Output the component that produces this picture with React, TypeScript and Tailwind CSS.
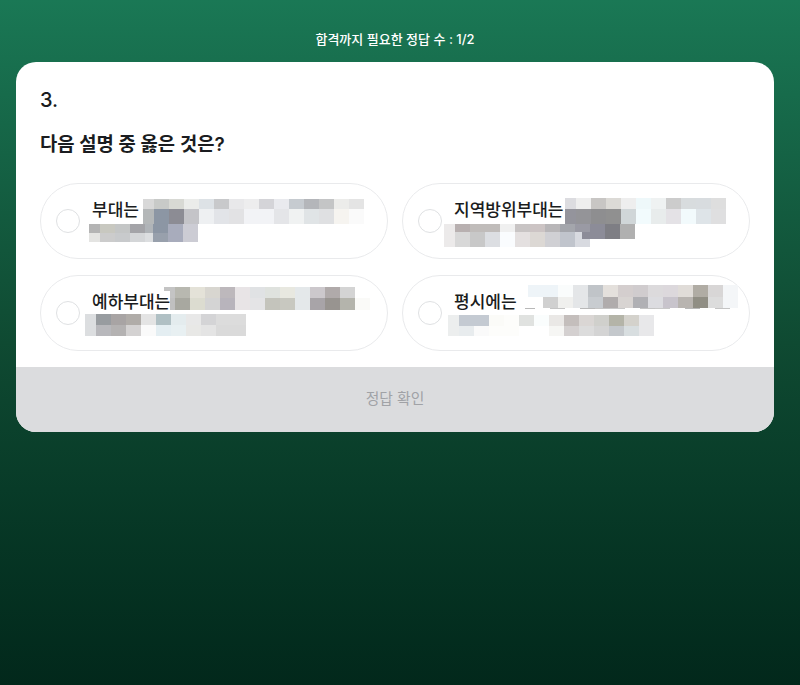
type MosaicRow = { y: number; h: number; x: number; first: number; colors: string[] }

const font = { fontFamily: '"Inter", "Noto Sans CJK KR", sans-serif' }

const options: { label: string; left: number; top: number; rows: MosaicRow[] }[] = [
  {
    label: '부대는',
    left: 40,
    top: 183,
    rows: [
      { y: 199, h: 10, x: 143, first: 11, colors: ['#d8d8d8', '#c8cac8', '#d8d9d4', '#ebecea', '#dde2e6', '#c8c9cb', '#e8e8ea', '#ededee', '#d4d4d8', '#e9eaee', '#c6cbd0', '#b4b6ba', '#c4c5c6', '#ececea', '#e4e4e4'] },
      { y: 209, h: 15, x: 143, first: 11, colors: ['#b4b7b8', '#8c96a4', '#8c8c94', '#c4c4c8', '#eef0f2', '#e2e4e8', '#e2e2e4', '#f2f3f6', '#f2f3f6', '#e4e5e8', '#f0f2f2', '#e0e4e6', '#dfe0e2', '#f6f4f0', '#fafafa'] },
      { y: 224, h: 9, x: 89, first: 11, colors: ['#b4b4b4', '#c8c8c0', '#c4c6c6', '#a4a4a8'] },
      { y: 224, h: 9, x: 145, first: 8, colors: ['#b0b4b8', '#8c96a4', '#a8acbc', '#ccccd4'] },
      { y: 233, h: 9, x: 89, first: 11, colors: ['#e4e4e2', '#cccccc', '#c8cacc', '#d4d6d8'] },
      { y: 233, h: 9, x: 145, first: 8, colors: ['#dcdee0', '#98a0ac', '#a8acbc', '#ccccd4'] },
    ],
  },
  {
    label: '지역방위부대는',
    left: 402,
    top: 183,
    rows: [
      { y: 198, h: 11, x: 565, first: 11, colors: ['#dcdce0', '#eeeeee', '#c8c6c4', '#dcdad6', '#eeeeee', '#eef8fa', '#eff2f2', '#cccccc', '#d8dcde', '#d8dcdf', '#dedede'] },
      { y: 209, h: 15, x: 565, first: 11, colors: ['#94949c', '#949498', '#8e8e90', '#909090', '#d0d6d8', '#f2fbfd', '#e8ecec', '#e4e2e6', '#f2fafc', '#dee4e8', '#dfdfe0'] },
      { y: 224, h: 8, x: 444, first: 11, colors: ['#eceaea', '#b8b0b0', '#c0bcba', '#c0bcba', '#f0f0f0', '#c8c4c4', '#ccc4c4', '#b8b6b8', '#a4a6ac', '#9a9aa4', '#8c8c98', '#7e7e84', '#b0b0b0'] },
      { y: 232, h: 15, x: 444, first: 11, colors: ['#eceaea', '#d8d8d8', '#c8c8c8', '#dcdee2', '#fafcfe', '#e4e0e0', '#dcd8d4', '#d0d0d4', '#c0c4cc', '#d8dae0'] },
      { y: 232, h: 7, x: 582, first: 23, colors: ['#8c8c98', '#7e7e84', '#b0b0b0'] },
    ],
  },
  {
    label: '예하부대는',
    left: 40,
    top: 275,
    rows: [
      { y: 287, h: 11, x: 164, first: 11, colors: ['#c4c4c4', '#b8b8b0', '#e4e2d8', '#d8d6d0', '#bdb8bc', '#e8e4e6', '#e0e2e4', '#dfe2de', '#e8e8e0', '#e4e8ea', '#ccc8cc', '#b0aaaa', '#d4d4d4'] },
      { y: 298, h: 12, x: 164, first: 11, colors: ['#c0c0c0', '#a8a8a0', '#dcdcd0', '#d4d4d4', '#b8b4bc', '#e8e4e6', '#e4e4e6', '#c4c4bc', '#c8c8c0', '#e4e8ea', '#a8a4a8', '#989490', '#b4b4ac', '#fafaf8'] },
      { y: 314, h: 11, x: 85, first: 11, colors: ['#dcdee0', '#989ca0', '#a8a4a4', '#b0aca8', '#e4e4e4', '#b0c0c4', '#e4ecee', '#e8e8e8', '#d4d4d6', '#dcdcdc', '#dcdcdc'] },
      { y: 325, h: 11, x: 85, first: 11, colors: ['#dcdee0', '#b8b8bc', '#b4b2b2', '#d4d2d2', '#fafafa', '#e4eef2', '#e8f0f2', '#e8e8e6', '#e4e4e4', '#dadada', '#dadada'] },
    ],
  },
  {
    label: '평시에는',
    left: 402,
    top: 275,
    rows: [
      { y: 285, h: 12, x: 528, first: 15, colors: ['#eef4f8', '#eef4f8', '#fafcfc', '#e4e6e8', '#c0c4c8', '#e4e0dc', '#d4cece', '#d0ccce', '#dcdadc', '#dcd8dc', '#e0dcd8', '#b0aca4', '#d8d6d6', '#f4f6f8'] },
      { y: 297, h: 11, x: 543, first: 15, colors: ['#d0d0d0', '#f0f0ee', '#e4e6e8', '#c8ccd0', '#b0acac', '#d8d4d2', '#b0b0b4', '#dcdce0', '#c8c4cc', '#b8b4b0', '#908e84', '#dcdcdc', '#f4f6f8'] },
      { y: 308, h: 1, x: 525, first: 10, colors: ['#b8b8b8', '#ffffff', '#c4c4c4', '#ffffff', '#b8b8b8', '#c4c4c4', '#c8c8c8', '#ffffff', '#c4c4c4', '#c8c8c8', '#ffffff', '#b8b8b8', '#ffffff', '#c4c4c4'] },
      { y: 315, h: 11, x: 448, first: 11, colors: ['#eceeee', '#c4cad2', '#c4cad2', '#fbfbf8', '#fdfdfb', '#e0e2e0', '#fafdfd', '#eae8e6', '#c4bebc', '#dad6d4', '#d0d0cc', '#b4b4a8', '#d4d2cc', '#e8e8ea'] },
      { y: 326, h: 10, x: 448, first: 11, colors: ['#eceeee', '#e8ecee', '#fafafa', '#fdfdfb', '#fdfdfb', '#ffffff', '#ffffff', '#f6f6f4', '#d4d0d0', '#dcdcdc', '#d4d4d4', '#c4c8cc', '#d8dee0', '#e8e8ea'] },
    ],
  },
]

// censored part of the answer text, coordinates are page pixels
function Mosaic({ left, top, rows }: { left: number; top: number; rows: MosaicRow[] }) {
  return (
    <svg className="absolute -inset-px pointer-events-none" width={348} height={76} viewBox={`${left} ${top} 348 76`} shapeRendering="crispEdges">
      {rows.map(row =>
        row.colors.map((color, i) => (
          <rect
            key={`${row.y}-${row.x}-${i}`}
            x={i === 0 ? row.x : row.x + row.first + (i - 1) * 15}
            y={row.y}
            width={i === 0 ? row.first : 15}
            height={row.h}
            fill={color}
          />
        ))
      )}
    </svg>
  )
}

export default function App() {
  return (
    <div className="min-h-[685px] pl-4 pr-[26px] bg-gradient-to-b from-[#1a7855] via-[#0f4a32] to-[#02281b]" style={font}>
      <div className="h-[62px] pt-[17px] flex items-center justify-center text-[13px] font-medium text-white">
        합격까지 필요한 정답 수 : 1/2
      </div>

      <div className="rounded-[20px] overflow-hidden bg-white">
        <div className="px-6 pt-6 pb-4">
          <div className="h-7 leading-7 text-[20px] font-medium text-[#1a1c20]">3.</div>
          <h2 className="mt-4 h-[30px] leading-[30px] text-[18.8px] font-semibold text-[#1a1c20]">다음 설명 중 옳은 것은?</h2>
          <div className="mt-[23px] grid grid-cols-2 gap-x-[14px] gap-y-4">
            {options.map(opt => (
              <div key={opt.label} className="relative h-[76px] flex items-center gap-3 pl-[15px] rounded-full border border-[#e9eaec] bg-white">
                <Mosaic left={opt.left} top={opt.top} rows={opt.rows} />
                <span className="relative w-6 h-6 rounded-full border border-[#dfe1e3] bg-white flex-shrink-0" />
                <div className="relative h-[46px] pt-px">
                  <span className="block w-fit leading-[23px] text-[17px] font-medium text-[#1a1c20] bg-white">{opt.label}</span>
                </div>
              </div>
            ))}
          </div>
        </div>
        <div className="h-[65px] flex items-center justify-center bg-[#dbdcde] text-[14.8px] text-[#a0a2a6]">정답 확인</div>
      </div>
    </div>
  )
}
